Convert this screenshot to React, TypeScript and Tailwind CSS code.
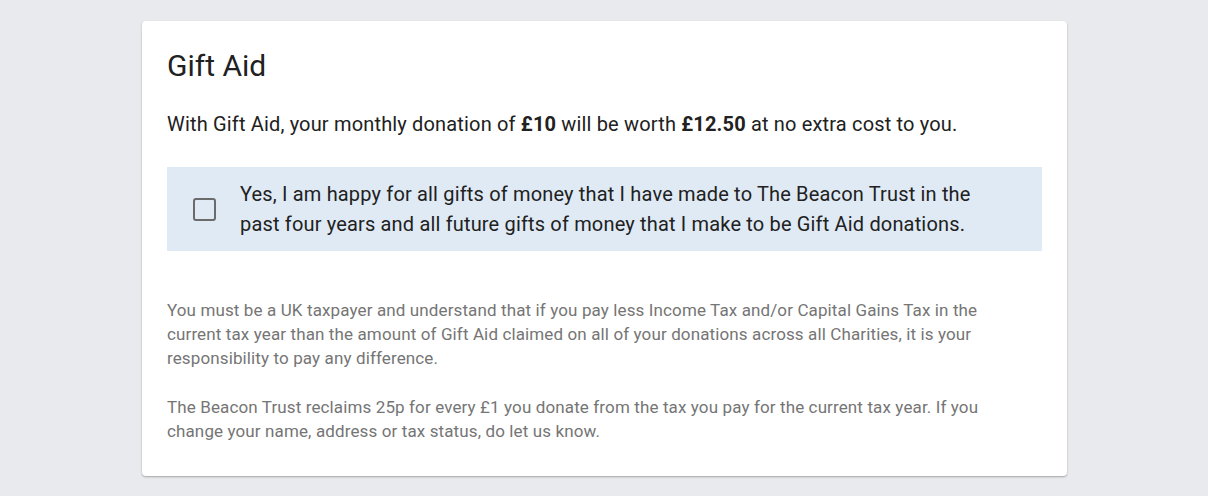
export default function App() {
  return (
    <div className="min-h-[496px] bg-[#e9eaee] px-[142px] pt-[21px] pb-5" style={{ fontFamily: 'Roboto, "Liberation Sans", sans-serif' }}>
      <section className="w-[925px] rounded-[4px] bg-white px-[25px] pt-[27px] pb-[33px] shadow-[0_1px_2px_rgba(0,0,0,0.3)]">
        <h2 className="text-[30px] leading-[36px] font-normal text-[#212121]">Gift Aid</h2>
        <p className="mt-[26px] text-[20px] leading-[28px] tracking-[0.165px] text-[#212121]">
          With Gift Aid, your monthly donation of <strong className="font-bold">£10</strong> will be worth{' '}
          <strong className="font-bold">£12.50</strong> at no extra cost to you.
        </p>
        <label className="mt-[29px] flex items-center gap-[24px] bg-[#dfeaf5] py-[12px] pr-[40px] pl-[26px]">
          <span className="h-[23px] w-[23px] shrink-0 rounded-[3px] border-2 border-[#6b6b6b]" />
          <span className="text-[20px] leading-[30px] tracking-[0.165px] text-[#212121]">
            Yes, I am happy for all gifts of money that I have made to The Beacon Trust in the past four years and all
            future gifts of money that I make to be Gift Aid donations.
          </span>
        </label>
        <div className="mt-[47px] space-y-[25px] pr-[25px] text-[17px] leading-[24px] tracking-[0.12px] text-[#757575]">
          <p>
            You must be a UK taxpayer and understand that if you pay less Income Tax and/or Capital Gains Tax in the
            current tax year than the amount of Gift Aid claimed on all of your donations across all Charities, it is
            your responsibility to pay any difference.
          </p>
          <p>
            The Beacon Trust reclaims 25p for every £1 you donate from the tax you pay for the current tax year. If you
            change your name, address or tax status, do let us know.
          </p>
        </div>
      </section>
    </div>
  )
}
